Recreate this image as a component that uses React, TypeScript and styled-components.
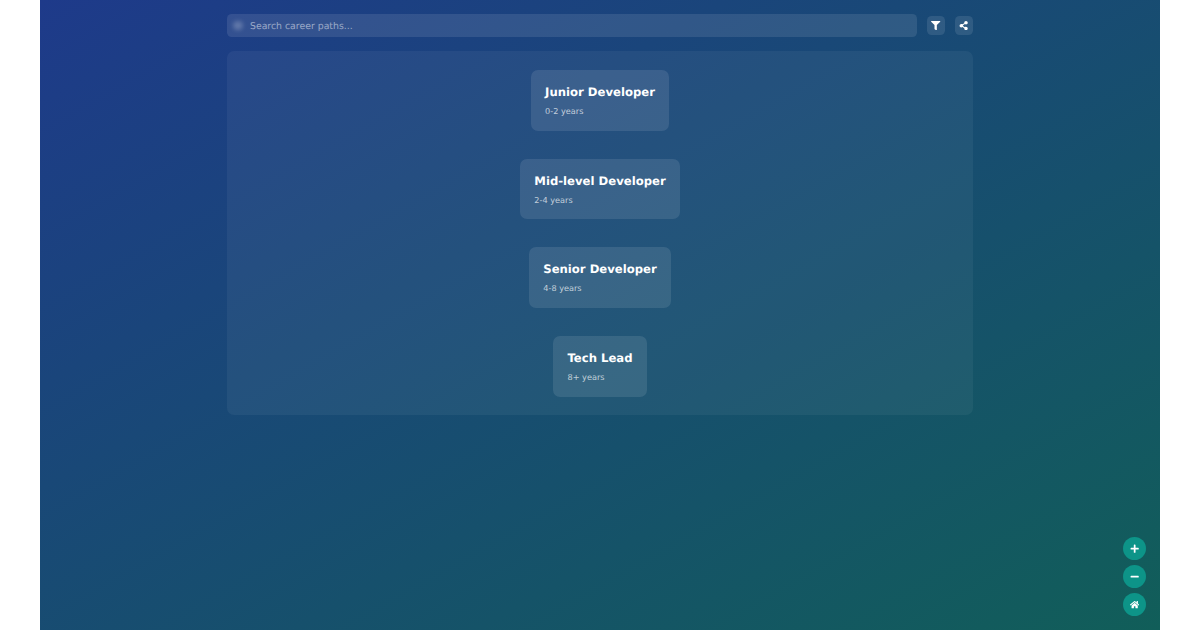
import React from "react";
import styled, { createGlobalStyle } from "styled-components";
import { FaFilter, FaShareAlt, FaPlus, FaMinus, FaHome } from "react-icons/fa";

const Global = createGlobalStyle`
  html, body { margin: 0; padding: 0; background: #fff; }
  body { font-family: "DejaVu Sans", sans-serif; text-rendering: geometricPrecision; }
`;

const Page = styled.div`
  width: 1120px;
  height: 630px;
  margin: 0 auto;
  position: relative;
  overflow: hidden;
  background: linear-gradient(to bottom right, #1e3a8a, #115e59);
`;

const Column = styled.main`
  width: 746.67px;
  margin: 0 auto;
  padding-top: 14px;
  display: flex;
  flex-direction: column;
  gap: 14px;
`;

const Toolbar = styled.div`
  display: flex;
  align-items: center;
  gap: 9.33px;
`;

const SearchBox = styled.div`
  flex: 1;
  box-sizing: border-box;
  height: 23.3px;
  border-radius: 4.67px;
  background: rgba(255, 255, 255, 0.1);
  display: flex;
  align-items: center;
  position: relative;
  padding: 1px 0 0 23.3px;
  font-size: 9.33px;
  color: rgba(255, 255, 255, 0.5);
`;

const SearchGlow = styled.span`
  position: absolute;
  left: 6.5px;
  top: 6.5px;
  width: 9.5px;
  height: 9.5px;
  border-radius: 50%;
  background: rgba(255, 255, 255, 0.22);
  filter: blur(2px);
`;

const ToolButton = styled.button`
  width: 18.67px;
  height: 18.67px;
  padding: 0;
  border: 0;
  border-radius: 4.67px;
  background: rgba(255, 255, 255, 0.1);
  display: flex;
  align-items: center;
  justify-content: center;
  color: #fff;
  font-size: 9.33px;
`;

const Panel = styled.section`
  height: 363.5px;
  box-sizing: border-box;
  border-radius: 7px;
  background: rgba(255, 255, 255, 0.05);
  padding-top: 18.67px;
  display: flex;
  flex-direction: column;
  align-items: center;
  gap: 28px;
`;

const Card = styled.article`
  box-sizing: border-box;
  height: 60.67px;
  padding: 14px;
  border-radius: 7px;
  background: rgba(255, 255, 255, 0.1);
`;

const Title = styled.h3`
  margin: 0;
  font-size: 11.67px;
  line-height: 17.5px;
  font-weight: 700;
  color: #fff;
  white-space: nowrap;
`;

const Years = styled.p`
  margin: 3.6px 0 0;
  font-size: 8.17px;
  line-height: 12.25px;
  color: rgba(255, 255, 255, 0.7);
`;

const Zoom = styled.div`
  position: absolute;
  right: 14px;
  bottom: 14px;
  display: flex;
  flex-direction: column;
  gap: 4.67px;
`;

const ZoomButton = styled.button`
  width: 23.33px;
  height: 23.33px;
  padding: 0;
  border: 0;
  border-radius: 50%;
  background: #0d9488;
  color: #fff;
  font-size: 9.33px;
  display: flex;
  align-items: center;
  justify-content: center;
`;

const steps = [
  ["Junior Developer", "0-2 years"],
  ["Mid-level Developer", "2-4 years"],
  ["Senior Developer", "4-8 years"],
  ["Tech Lead", "8+ years"],
];

export default function App() {
  return (
    <Page>
      <Global />
      <Column>
        <Toolbar>
          <SearchBox>
            <SearchGlow />
            Search career paths...
          </SearchBox>
          <ToolButton aria-label="Filter"><FaFilter /></ToolButton>
          <ToolButton aria-label="Share"><FaShareAlt /></ToolButton>
        </Toolbar>
        <Panel>
          {steps.map(([t, y]) => (
            <Card key={t}>
              <Title>{t}</Title>
              <Years>{y}</Years>
            </Card>
          ))}
        </Panel>
      </Column>
      <Zoom>
        <ZoomButton aria-label="Zoom in"><FaPlus /></ZoomButton>
        <ZoomButton aria-label="Zoom out"><FaMinus /></ZoomButton>
        <ZoomButton aria-label="Home"><FaHome /></ZoomButton>
      </Zoom>
    </Page>
  );
}
